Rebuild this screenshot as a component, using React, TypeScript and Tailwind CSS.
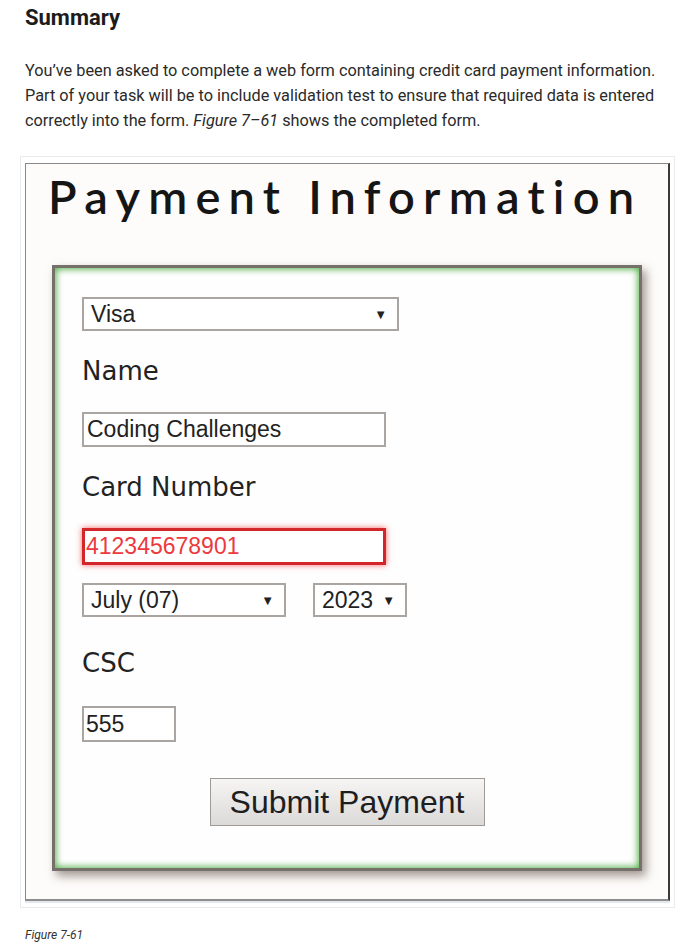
import React from "react";

const arial = { fontFamily: '"Liberation Sans", Arial, sans-serif' };
const dejavu = { fontFamily: '"DejaVu Sans", Verdana, sans-serif' };

function FakeSelect({ label, width }: { label: string; width: string }) {
  return (
    <div
      className={`flex h-[34px] items-center justify-between border-2 border-[#aaa5a1] bg-white pl-[7px] pr-[10px] text-[23px] leading-none text-[#222] ${width}`}
      style={arial}
    >
      <span>{label}</span>
      <span className="text-[13px]">▼</span>
    </div>
  );
}

function Label({ children }: { children: React.ReactNode }) {
  return (
    <div className="text-[26px] leading-[30px] text-[#222]" style={dejavu}>
      {children}
    </div>
  );
}

export default function App() {
  return (
    <div className="h-[946px] w-[693px] overflow-hidden bg-white">
      <div className="px-[25px] pt-[4px]">
        <h2
          className="text-[22px] font-bold leading-[28px] text-[#1c1c1c]"
          style={{ fontFamily: 'Roboto, "Noto Sans", sans-serif' }}
        >
          Summary
        </h2>
        <p
          className="mt-[26px] whitespace-nowrap text-[16.3px] leading-[25px] text-[#2a2a2a]"
          style={{ fontFamily: 'Roboto, "Noto Sans", sans-serif' }}
        >
          You’ve been asked to complete a web form containing credit card payment information.
          <br />
          Part of your task will be to include validation test to ensure that required data is entered
          <br />
          correctly into the form. <i>Figure 7–61</i> shows the completed form.
        </p>
      </div>

      {/* figure */}
      <div className="ml-[20px] mt-[23px] w-[655px] border border-[#e9ebee] pb-[6px] pl-[4px] pr-[4px] pt-[6px]">
        <div className="border-b-[2px] border-l-[1.5px] border-r-[2px] border-t-[1.5px] border-b-[#8d8d8d] border-l-[#8a8a8a] border-r-[#3a3a3a] border-t-[#8a8a8a] bg-[#fdfcfa] pb-[28px] pl-[26px] pr-[26px] shadow-[0_2px_0_#e3e8ee]">
          <div
            className="-ml-[4px] whitespace-nowrap pt-[4px] text-[47px] font-semibold leading-[56px] tracking-[0.175em] text-[#151515]"
            style={{ fontFamily: 'Lato, "Open Sans", sans-serif' }}
          >
            Payment Information
          </div>

          <div className="mt-[41px] border-[3px] border-[#757069] bg-[#fefefe] pb-[42px] pl-[27px] pr-[27px] pt-[29px] shadow-[inset_0_0_7px_1px_#4fae45,4px_5px_9px_rgba(90,70,60,0.55)]">
            <FakeSelect label="Visa" width="w-[317px]" />

            <div className="mt-[25px]">
              <Label>Name</Label>
            </div>
            <div
              className="mt-[26px] flex h-[35px] w-[304px] items-center border-2 border-[#aaa5a1] bg-white pl-[3px] text-[23px] leading-none text-[#222]"
              style={arial}
            >
              Coding Challenges
            </div>

            <div className="mt-[25px]">
              <Label>Card Number</Label>
            </div>
            <div
              className="mt-[26px] flex h-[37px] w-[304px] items-center border-[3px] border-[#d3262a] bg-white pl-[1px] text-[23px] leading-none text-[#ec3a3e] shadow-[0_0_6px_rgba(240,40,40,0.7)]"
              style={arial}
            >
              412345678901
            </div>

            <div className="mt-[18px] flex gap-[27px]">
              <FakeSelect label="July (07)" width="w-[204px]" />
              <FakeSelect label="2023" width="w-[94px]" />
            </div>

            <div className="mt-[31px]">
              <Label>CSC</Label>
            </div>
            <div
              className="mt-[28px] flex h-[36px] w-[94px] items-center border-2 border-[#aaa5a1] bg-white pl-[2px] text-[23px] leading-none text-[#222]"
              style={arial}
            >
              555
            </div>

            <div className="mt-[36px] flex justify-center">
              <div
                className="flex h-[48px] w-[275px] items-center justify-center border border-[#9d9a98] bg-gradient-to-b from-[#f6f5f4] to-[#dcdad8] text-[32px] leading-none text-[#1e1e1e]"
                style={arial}
              >
                Submit Payment
              </div>
            </div>
          </div>
        </div>
      </div>

      <div
        className="ml-[25px] mt-[20px] text-[12px] italic leading-[14px] text-[#333]"
        style={{ fontFamily: 'Roboto, "Noto Sans", sans-serif' }}
      >
        Figure 7-61
      </div>
    </div>
  );
}
